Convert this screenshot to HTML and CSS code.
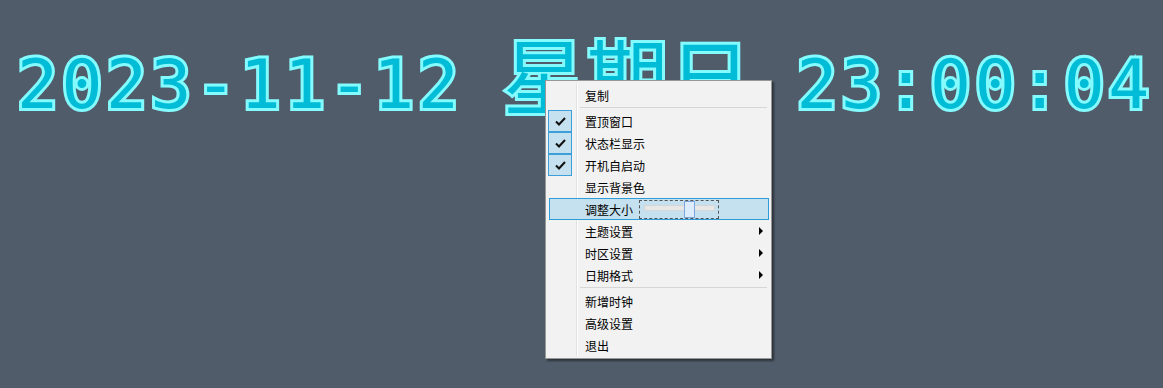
FILE: index.html
```html
<!DOCTYPE html>
<html lang="zh-CN">
<head>
<meta charset="utf-8">
<title>Clock</title>
<link rel="stylesheet" href="styles.css">
</head>
<body>
<div class="stage">
  <div class="clock"><span class="num">2023-11-12 </span><span class="cjk">星期日</span><span class="num"> 23:00:04</span></div>

  <div class="menu">
    <div class="item"><span class="gut"></span><span class="label">复制</span></div>
    <div class="sep"></div>
    <div class="item"><span class="gut"><span class="check"><svg width="11" height="9" viewBox="0 0 11 9"><path d="M1 4.5 L4 7.5 L10 1" fill="none" stroke="#111" stroke-width="2"/></svg></span></span><span class="label">置顶窗口</span></div>
    <div class="item"><span class="gut"><span class="check"><svg width="11" height="9" viewBox="0 0 11 9"><path d="M1 4.5 L4 7.5 L10 1" fill="none" stroke="#111" stroke-width="2"/></svg></span></span><span class="label">状态栏显示</span></div>
    <div class="item"><span class="gut"><span class="check"><svg width="11" height="9" viewBox="0 0 11 9"><path d="M1 4.5 L4 7.5 L10 1" fill="none" stroke="#111" stroke-width="2"/></svg></span></span><span class="label">开机自启动</span></div>
    <div class="item"><span class="gut"></span><span class="label">显示背景色</span></div>
    <div class="item hot"><span class="gut"></span><span class="label">调整大小</span>
      <span class="slider"><span class="track"></span><span class="thumb"></span></span>
    </div>
    <div class="item"><span class="gut"></span><span class="label">主题设置</span><span class="arrow"></span></div>
    <div class="item"><span class="gut"></span><span class="label">时区设置</span><span class="arrow"></span></div>
    <div class="item"><span class="gut"></span><span class="label">日期格式</span><span class="arrow"></span></div>
    <div class="sep"></div>
    <div class="item"><span class="gut"></span><span class="label">新增时钟</span></div>
    <div class="item"><span class="gut"></span><span class="label">高级设置</span></div>
    <div class="item"><span class="gut"></span><span class="label">退出</span></div>
  </div>
</div>
</body>
</html>
```
FILE: styles.css
```css
html, body {
  margin: 0;
  padding: 0;
  background: #505c6a;
}
.stage {
  position: relative;
  width: 1163px;
  height: 388px;
  overflow: hidden;
}
.clock {
  padding: 32px 0 0 17px;
  white-space: pre;
  line-height: 1;
  color: #00bcd6;
  -webkit-text-stroke: 6px #84fbff;
  paint-order: stroke fill;
}
.num {
  font-family: "DejaVu Sans Mono", "Liberation Mono", monospace;
  font-size: 68px;
  letter-spacing: 3.6px;
}
.cjk {
  font-family: "Noto Sans CJK SC", sans-serif;
  font-size: 82px;
  letter-spacing: 1px;
  margin-left: -4px;
}
.menu {
  position: absolute;
  left: 545px;
  top: 80px;
  box-sizing: border-box;
  width: 227px;
  padding: 3px 2px 2px 2px;
  background: #f2f2f2;
  border: 1px solid #979797;
  box-shadow: 2px 2px 2px rgba(0, 0, 0, 0.45);
  font-family: "Noto Sans CJK SC", "Noto Sans", sans-serif;
  font-size: 12px;
  color: #000;
}
.menu::before {
  content: "";
  position: absolute;
  left: 30px;
  top: 2px;
  bottom: 2px;
  width: 1px;
  background: #e1e1e1;
  border-right: 1px solid #fff;
}
.item {
  position: relative;
  display: flex;
  align-items: center;
  height: 22px;
  box-sizing: border-box;
  border: 1px solid transparent;
  margin-left: 1px;
}
.item.hot {
  background: #c5e1ef;
  border-color: #2d9cd9;
}
.gut {
  width: 24px;
  height: 22px;
  margin-left: -2px;
  flex: none;
  display: flex;
  align-items: center;
}
.check {
  width: 22px;
  height: 20px;
  display: flex;
  align-items: center;
  justify-content: center;
  background: #c5e1ef;
  border: 1px solid #3d9fd9;
}
.label {
  margin-left: 13px;
  line-height: 19px;
  padding-top: 1px;
}
.sep {
  height: 1px;
  background: #d6d6d6;
  margin: 1px 2px 2px 32px;
}
.arrow {
  margin-left: auto;
  margin-right: 5px;
  width: 0;
  height: 0;
  border-left: 4px solid #000;
  border-top: 4px solid transparent;
  border-bottom: 4px solid transparent;
}
.slider {
  position: relative;
  margin-left: 6px;
  width: 80px;
  height: 19px;
  box-sizing: border-box;
  border: 1px dashed #555;
}
.track {
  position: absolute;
  left: 4px;
  right: 3px;
  top: 4px;
  height: 4px;
  background: #e7e7e7;
  border: 1px solid #d6d6d6;
}
.thumb {
  position: absolute;
  left: 44px;
  top: 0;
  width: 9px;
  height: 15px;
  background: #dcecfc;
  border: 1px solid #7ba6de;
}
```
